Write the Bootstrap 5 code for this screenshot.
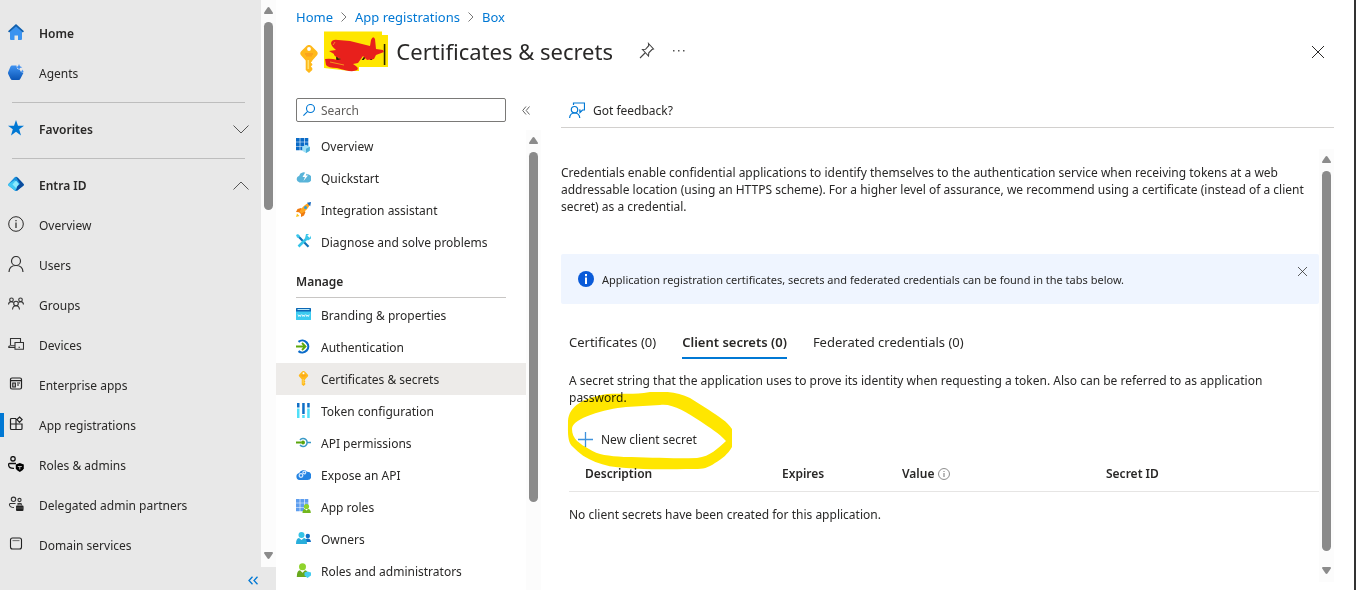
<!DOCTYPE html>
<html lang="en">
<head>
<meta charset="utf-8">
<meta name="viewport" content="width=device-width, initial-scale=1">
<title>Box | Certificates &amp; secrets</title>
<link href="https://cdn.jsdelivr.net/npm/bootstrap@5.3.0/dist/css/bootstrap.min.css" rel="stylesheet">
<style>
:root{--ink:#292827;--azure:#0078d4;--thumb:#8b8b8b}
body{font-family:"Noto Sans","Open Sans",sans-serif;font-size:12px;line-height:17px;color:var(--ink);background:#fff}
a{text-decoration:none}
svg{flex:none;display:block}
.semi{font-weight:600}
/* scroll bars */
.track{width:15px;background:#fcfcfc;padding:7px 3px 8px;flex:none}
.track svg{width:9px;height:7px;fill:var(--thumb)}
.thumb{width:9px;border-radius:5px;background:var(--thumb);margin-top:8px}
.menu .track{margin-bottom:-16px}
/* portal navigation */
.portal{width:276px;background:#e8e8e8;flex:none}
.portal .nav{padding-top:13px}
.portal .nav-link{height:40px;padding:0 12px 0 8px;gap:15px;color:var(--ink);display:flex;align-items:center;flex-shrink:0}
.portal .nav-link>svg:first-child{margin-bottom:2px}
.portal .current{position:relative}
.portal .current::before{content:"";position:absolute;left:0;top:8px;bottom:8px;width:4px;background:var(--azure)}
.portal hr{margin:9px 16px 6px 12px;border-color:#bdbdbd;opacity:1}
.collapse-row{height:23px;padding:4px 18px 0 0}
/* header */
.blade{border-right:2px solid #333}
.crumbs{height:34px;padding-left:20px;gap:8px;font-size:13px}
.crumbs,.crumbs a{color:var(--azure)}
.title-row{height:64px;padding:0 30px 0 20px}
.title-row h1{font-size:22px;line-height:34px;font-weight:400;margin:0 0 0 16px}
.title-key{margin:11px 0 0 4px}
.title-row .tools{margin:8px 0 0 26px;gap:18px}
.plain{border:0;background:none;padding:0;color:var(--ink)}
.marker{position:absolute;pointer-events:none}
.title-ink{left:-10px;top:-3px}
.multiply{mix-blend-mode:multiply}
/* resource menu */
.menu{width:265px;flex:none}
.search{height:24px;width:210px;margin:0 0 0 20px;border:1px solid #7a7977;border-radius:2px;padding:0 6px;gap:6px}
.search input{border:0;outline:0;padding:0;background:none;font-size:12px;width:100%}
.search input::placeholder{color:#605e5c;opacity:1}
.menu .nav-link{height:32px;padding:0 0 0 20px;gap:10px;color:var(--ink);display:flex;align-items:center;flex-shrink:0}
.menu .nav-link>svg{margin-bottom:2px}
.menu .nav-link.active{background:#edebe9}
.menu h2{font-size:12px;line-height:17px;margin:15px 20px 1px;padding-bottom:7px;border-bottom:1px solid #c8c6c4}
/* work area */
.work{padding:0 20px}
.toolbar{height:30px;border-bottom:1px solid #d2d0ce;padding:0 8px 5px;margin-bottom:21px}
.intro{margin:15px 0 39px}
.notice{background:#eff5ff;border:0;border-radius:2px;height:50px;padding:0 12px 0 17px;gap:8px;color:var(--ink);font-size:11px}
.tabs{padding-left:8px;gap:26px;margin-top:25px;font-size:13px}
.tabs .nav-link{padding:5px 0 6px;color:var(--ink);border-bottom:2px solid transparent;line-height:17px}
.tabs .nav-link.active{border-color:var(--azure);font-weight:600}
.secrets{padding-left:8px}
.secrets p{margin:13px 0 16px}
.add{height:34px;gap:8px;padding-left:9px}
.ring{left:-2px;top:-30px}
.secrets table{table-layout:fixed;margin:0;font-size:12px;color:var(--ink)}
.secrets th{font-weight:600;padding:9px 16px;line-height:17px;border-color:#e6e5e4}
.secrets td{padding:14px 0;border:0}
</style>
</head>
<body>
<svg width="0" height="0" class="position-absolute" aria-hidden="true">
 <symbol id="up" viewBox="0 0 9 7"><path d="M3.4.8Q4.5-.6 5.6.8L8.8 5.4Q9.300 7 8 7H1Q-.3 7 .2 5.400z"/></symbol>
 <symbol id="down" viewBox="0 0 9 7"><path d="M3.400 6.200Q4.500 7.600 5.600 6.200L8.800 1.600Q9.300 0 8 0H1Q-.3 0 .2 1.600z"/></symbol>
 <symbol id="key" viewBox="0 0 18 28"><path fill="#ffb91b" d="M9 0C7.500 0 7 .5 6 1.500L1.200 6.300C0 7.500 0 9 1 10.300L5.700 15.500V25L9 28l3.300-3v-2l-1.500-1.500 1.500-1.500v-1l-1.500-1.500 1.500-1.500v-.5L17 10.300c1-1.300 1-2.800-.2-4L12 1.500C11 .5 10.500 0 9 0z"/><circle cx="9" cy="4" r="1.900" fill="#fff"/><path d="M5 8.500h8v1H5zM6 10.500h6v.8H6z" fill="#f78d1e"/><path d="M7.500 15h1.600v9H7.500z" fill="#ffe06c"/></symbol>
 <symbol id="info" viewBox="0 0 16 16"><circle cx="8" cy="8" r="7.300" fill="none" stroke="currentColor"/><path d="M7.400 6.500h1.200V12H7.400zM7.400 4h1.200v1.300H7.400z" fill="currentColor"/></symbol>
 <symbol id="cross" viewBox="0 0 12 12"><path d="M0 0 12 12M12 0 0 12" stroke="currentColor" fill="none"/></symbol>
</svg>
<div class="d-flex vh-100 overflow-hidden">
 <aside class="portal d-flex flex-column">
  <div class="d-flex flex-fill overflow-hidden">
   <nav class="nav flex-column flex-nowrap flex-fill" aria-label="Portal">
    <a class="nav-link semi" href="#"><svg width="16" height="16" viewBox="0 0 16 16"><path d="M2 7.500 8 2l6 5.500V15a1 1 0 0 1-1 1H10v-4.500H6.500V16H3a1 1 0 0 1-1-1z" fill="#3b93f0"/><path d="M8 0 0 7.300 1.200 8.500 8 2.500l6.800 6L16 7.300z" fill="#0f5fae"/></svg>Home</a>
    <a class="nav-link" href="#"><svg width="16" height="16" viewBox="0 0 16 16"><defs><linearGradient id="ag" x2="0" y2="1"><stop stop-color="#3e93f2"/><stop offset="1" stop-color="#0b55b5"/></linearGradient></defs><path d="M4 1.500h4.500c0 3 1 4 3.500 4.500.5 2 1.500 2.500 3.500 2.700L12.500 14.500Q12 16 10.500 16h-6Q3 16 2.400 14.500L.2 10q-.4-1 0-2L2.400 2.800Q3 1.500 4 1.500z" fill="url(#ag)"/><path d="M11 0l.9 2.300 2.400.9-2.400.9L11 6.500l-.9-2.400-2.300-.9 2.300-.9zM14.300 5.500l.5 1.200 1.200.5-1.200.5-.5 1.200-.5-1.200-1.200-.5 1.200-.5z" fill="#3c8df0"/></svg>Agents</a>
    <hr>
    <a class="nav-link semi" href="#"><svg width="16" height="16" viewBox="0 0 16 16"><path fill="#0078d4" d="M8 0l2 5.700h6l-4.800 3.600L13 15.500 8 11.800l-5 3.700 1.800-6.200L0 5.700h6z"/></svg>Favorites<svg class="ms-auto" width="16" height="9" viewBox="0 0 16 9" fill="none" stroke="#555"><path d="M.5.5 8 8 15.500.5"/></svg></a>
    <hr>
    <a class="nav-link semi" href="#"><svg width="16" height="16" viewBox="0 0 16 16"><path d="M8 .8Q9 .8 10 2l5.600 6q.7 1-.3 1.800L9 14.700q-1 .7-2 0L.7 9.800Q-.3 9 .4 8L6 2Q7 .8 8 .8z" fill="#1890dc"/><path d="M8 .8 10 2l5.600 6q.7 1-.3 1.800L9 14.700 7 12 12 8z" fill="#0b4b9c"/><path d="M.4 8 7 4l2 8-2 2.500L.7 9.800Q-.2 9 .4 8z" fill="#40c8f4"/><path d="M8 4.500 11 8 8 12 4.500 8.500z" fill="#8ceafd"/></svg>Entra ID<svg class="ms-auto" width="16" height="9" viewBox="0 0 16 9" fill="none" stroke="#555"><path d="M.5 8.500 8 1l7.500 7.500"/></svg></a>
    <a class="nav-link" href="#"><svg width="16" height="16"><use href="#info"/></svg>Overview</a>
    <a class="nav-link" href="#"><svg width="16" height="16" viewBox="0 0 16 16" fill="none" stroke="#333" stroke-width="1.200"><circle cx="8" cy="5" r="4.500"/><path d="M1 16q.3-6.500 7-6.500t7 6.500"/></svg>Users</a>
    <a class="nav-link" href="#"><svg width="16" height="16" viewBox="0 0 16 16" fill="none" stroke="#333" stroke-width="1.100"><circle cx="8" cy="7.500" r="2.300"/><circle cx="3.500" cy="3.800" r="1.800"/><circle cx="12.500" cy="3.800" r="1.800"/><path d="M4.500 13.500q.4-3.700 3.500-3.700t3.500 3.700M.5 8.500q.2-2.900 3-2.900l2 .8M15.500 8.500q-.2-2.900-3-2.900l-2 .8"/></svg>Groups</a>
    <a class="nav-link" href="#"><svg width="16" height="16" viewBox="0 0 16 16" fill="none" stroke="#333" stroke-width="1.100"><path d="M2.500 9V2.500h10V6M.5 11.500q0-1.500 2-1.800h4M.5 11.500h6M7 6.500h8.500v6.800H7zM10.500 11.200H12"/></svg>Devices</a>
    <a class="nav-link" href="#"><svg width="16" height="16" viewBox="0 0 16 16" fill="none" stroke="#222" stroke-width="1.200"><rect x="2.500" y="2" width="11" height="11" rx="1.500"/><path d="M2.500 4.600h11M4.800 7h2.500v4H4.800zM9 7h3M9 9h2"/></svg>Enterprise apps</a>
    <a class="nav-link current" href="#" aria-current="page"><svg width="16" height="16" viewBox="0 0 16 16" fill="none" stroke="#222" stroke-width="1.200"><path d="M8 2.500H3.500q-1 0-1 1v9q0 1 1 1H13q1 0 1-1V8H2.500M8 2.500v11M11.500 1l2.600 2.600-2.600 2.700L9 3.600z"/></svg>App registrations</a>
    <a class="nav-link" href="#"><svg width="16" height="16" viewBox="0 0 16 16" fill="none" stroke="#111" stroke-width="1.300"><circle cx="5" cy="2.800" r="2.200"/><path d="M8 7.500H1.500Q.5 7.500.6 9q.4 3.500 5.400 3.300"/><path d="M11.800 7l4 1.500v3.700q-.5 2.600-4 3.800-3.500-1.200-4-3.800V8.500z" fill="#000" stroke="none"/><path d="M9.800 10.500h4M11.800 10.500v3" stroke="#bbb" stroke-width="1"/></svg>Roles &amp; admins</a>
    <a class="nav-link" href="#"><svg width="16" height="16" viewBox="0 0 16 16" fill="none" stroke="#333" stroke-width="1.100"><circle cx="5.500" cy="3.300" r="2.200"/><circle cx="11.500" cy="4" r="1.600"/><path d="M7.500 7.500H2.200Q1.400 7.500 1.500 9 2 11.500 6 11.500M13.500 7.500h-4"/><rect x="8" y="9.500" width="7.500" height="5.500" rx="1" fill="#222" stroke="none"/><path d="M10 9.500V8.200h3.500v1.300M8 12h7.500" stroke="#555"/></svg>Delegated admin partners</a>
    <a class="nav-link" href="#"><svg width="16" height="16" viewBox="0 0 16 16" fill="none" stroke="#222" stroke-width="1.100"><rect x="2.500" y="2" width="11" height="11" rx="2"/><path d="M4.500 4.600h7" stroke="#777"/></svg>Domain services</a>
   </nav>
   <div class="track d-flex flex-column" aria-hidden="true"><svg><use href="#up"/></svg><div class="thumb" style="height:34%"></div><svg class="mt-auto"><use href="#down"/></svg></div>
  </div>
  <div class="collapse-row d-flex align-items-center justify-content-end">
   <button class="plain" aria-label="Collapse navigation"><svg width="10" height="9" viewBox="0 0 10 9" fill="none" stroke="#0078d4" stroke-width="1.300"><path d="M4.500.8 1 4.500 4.500 8.200M9.500.8 6 4.500l3.500 3.700"/></svg></button>
  </div>
 </aside>

 <main class="blade d-flex flex-column flex-fill overflow-hidden">
  <nav class="crumbs d-flex align-items-center flex-shrink-0" aria-label="breadcrumb">
   <a href="#">Home</a><svg width="6" height="10" viewBox="0 0 6 10" fill="none" stroke="#777"><path d="M.5.5 5 5 .5 9.500"/></svg>
   <a href="#">App registrations</a><svg width="6" height="10" viewBox="0 0 6 10" fill="none" stroke="#777"><path d="M.5.5 5 5 .5 9.500"/></svg>
   <a href="#">Box</a>
  </nav>
  <header class="title-row d-flex align-items-start flex-shrink-0">
   <div class="d-flex align-items-start">
    <svg class="title-key" width="18" height="28"><use href="#key"/></svg>
    <h1 class="position-relative">Box | Certificates &amp; secrets
     <svg class="marker title-ink multiply" width="66" height="42" viewBox="0 0 66 42"><path d="M0 .5H58V4H64V36H35V40H26L0 37z" fill="#ffe600"/></svg>
     <svg class="marker title-ink" width="66" height="42" viewBox="0 0 66 42"><path d="M7 12Q8 8 14 9L26 10 46 15 47 9Q49 4 51 8L52 18 59 19 60 21 52 24 50 28 43 29 39 25 34 32 29 33Q36 37 33 39 28 42 13 37 4 37 2 34L1 28Q6 27 14 29L17 28Q9 25 10 23L5 20 12 19Q7 15 7 12z" fill="#e8201c"/><path d="M6 31l14 3M11 11l-2 3" stroke="#f5921c"/></svg>
    </h1>
   </div>
   <div class="tools d-flex align-items-center">
    <button class="plain" aria-label="Pin"><svg width="16" height="17" viewBox="0 0 16 17" fill="none" stroke="#444" stroke-width="1.100"><path d="M9.500 1.500 14.500 7 13 7.500l-3.200 3.300L9.500 14 3.500 7.500l3-.2 3.200-3.600zM6 11l-5 5"/></svg></button>
    <button class="plain" aria-label="More"><svg width="12" height="2" viewBox="0 0 12 2"><path fill="#555" d="M0 0h1.500v1.500H0zM5 0h1.500v1.500H5zM10 0h1.500v1.500H10z"/></svg></button>
   </div>
   <button class="plain ms-auto mt-2" aria-label="Close"><svg class="mt-1" width="12" height="12"><use href="#cross"/></svg></button>
  </header>

  <div class="d-flex flex-fill overflow-hidden">
   <section class="menu d-flex flex-column">
    <div class="d-flex align-items-center flex-shrink-0 pb-0">
     <label class="search d-flex align-items-center"><svg width="12" height="12" viewBox="0 0 12 12" fill="none" stroke="#0078d4" stroke-width="1.100"><circle cx="7.500" cy="4.500" r="4"/><path d="M4.700 7.300.4 11.600"/></svg><input type="search" placeholder="Search" aria-label="Search"></label>
     <button class="plain ms-3" aria-label="Collapse menu"><svg width="8" height="9" viewBox="0 0 8 9" fill="none" stroke="#666"><path d="M4 .5.700 4.500 4 8.500M7.500.5 4.200 4.500l3.300 4"/></svg></button>
    </div>
    <div class="d-flex flex-fill overflow-hidden mt-2">
     <nav class="nav flex-column flex-nowrap flex-fill" aria-label="Resource menu">
      <a class="nav-link" href="#"><svg width="15" height="15" viewBox="0 0 15 15"><path fill="#0a6bc7" d="M0 0h3.700v3.700H0zM4.300 0H8v3.700H4.300zM8.600 0h3.700v3.700H8.600zM0 4.300h3.700V8H0zM4.300 4.300H8V8H4.300zM8.600 4.300h3.700V8H8.600zM0 8.600h3.700v3.700H0zM4.300 8.600H8v3.700H4.300z"/><path fill="#9fe0f7" d="M10 6.800l3.800 2v4L10 15l-3.800-2.200v-4z"/><path fill="#4bb0d8" d="M10 10.800l3.800-2v4L10 15z"/></svg>Overview</a>
      <a class="nav-link" href="#"><svg width="15" height="15" viewBox="0 0 15 15"><path fill="#59b4d9" d="M3.500 12.500a3.500 3.500 0 0 1-.3-6.800A4.300 4.300 0 0 1 11 4.300a4 4 0 0 1 1 8.200z"/><path fill="#fff" d="M9.500 2 6.500 7H9l-1.500 4L12 5.500H9.700L11.500 2z"/></svg>Quickstart</a>
      <a class="nav-link" href="#"><svg width="15" height="15" viewBox="0 0 15 15"><path fill="#ef7b10" d="M5 6 1.500 7 0 10l3 .2L5 12v3l3-1.500L9.500 10z"/><path fill="#ffa51f" d="M13 1Q7.500 2.500 3.500 9.500l2 2Q12 8 14 2z"/><path d="M11 0.800 15 0l-.8 4.200Q12.500 3 11 .8z" fill="#1768c0"/><circle cx="9.500" cy="5.500" r="1.500" fill="#2b9ad6"/><path d="M0 15l1-3.500L3.500 14z" fill="#fcc419"/></svg>Integration assistant</a>
      <a class="nav-link" href="#"><svg width="15" height="15" viewBox="0 0 15 15"><path d="M2 2 12.500 12.800" stroke="#1173b8" stroke-width="2.200"/><path d="M12.500 2.800 2.500 12.500" stroke="#35c4e8" stroke-width="2.600"/><path d="M0 1 2 0l2 2-1 2-2-.5zM10 0l3 0-2 2 1 2 2-.500 1-2v3l-3 2-3-2z" fill="#3cc6ea"/></svg>Diagnose and solve problems</a>
      <h2 class="semi">Manage</h2>
      <a class="nav-link" href="#"><svg width="15" height="15" viewBox="0 0 15 15"><path fill="#3ccbf0" d="M0 2h15v10.500q0 .5-.5.500H.5Q0 13 0 12.500z"/><path fill="#0c67b5" d="M.5 1h14q.5 0 .5.5V4.500H0v-3Q0 1 .5 1z"/><path d="M1.500 2h12v1h-12z" fill="#b9e7f8"/><path d="M2 7.500l.8 2 .8-1.500.8 1.500.8-2M6 7.500l.8 2 .8-1.500.8 1.500.8-2M10 7.500l.8 2 .8-1.500.8 1.500.8-2" fill="none" stroke="#fff" stroke-width=".8"/></svg>Branding &amp; properties</a>
      <a class="nav-link" href="#"><svg width="15" height="15" viewBox="0 0 15 15" fill="none"><path d="M2.500 2.800A6 6 0 1 1 2.500 12.200" stroke="#0a6bc9" stroke-width="2.200"/><path d="M0 7.500h9M6 4l3.500 3.500L6 11" stroke="#5ea90b" stroke-width="1.800"/></svg>Authentication</a>
      <a class="nav-link active" href="#" aria-current="page"><svg width="15" height="15"><use href="#key"/></svg>Certificates &amp; secrets</a>
      <a class="nav-link" href="#"><svg width="15" height="15" viewBox="0 0 15 15"><path fill="#0f6fc6" d="M1 0h2.500v4.500H1zM6.200 0h2.500v11H6.200zM11.200 0h2.500v4.500h-2.500z"/><path fill="#50dff8" d="M1 5.500h2.500V15H1zM6.200 12h2.500v3H6.200zM11.200 5.500h2.500V15h-2.500z"/></svg>Token configuration</a>
      <a class="nav-link" href="#"><svg width="15" height="15" viewBox="0 0 15 15" fill="none"><path d="M4 5a4 4 0 1 1 0 5M11 7.500h4" stroke="#3999c6" stroke-width="1.500"/><path d="M0 7.500h5" stroke="#59a50d" stroke-width="2"/><circle cx="7" cy="7.500" r="2" fill="#59a50d"/></svg>API permissions</a>
      <a class="nav-link" href="#"><svg width="15" height="15" viewBox="0 0 15 15"><path fill="#2383e2" d="M3.500 13a3.500 3.500 0 0 1-.3-6.900A4.500 4.500 0 0 1 11 4.800 4.100 4.100 0 0 1 11.500 13z"/><circle cx="5" cy="8.500" r="1.800" fill="none" stroke="#cfe6ff" stroke-width="1.300"/><circle cx="8.300" cy="5.500" r="1.400" fill="none" stroke="#cfe6ff" stroke-width="1.200"/></svg>Expose an API</a>
      <a class="nav-link" href="#"><svg width="15" height="15" viewBox="0 0 15 15"><path fill="#5e9eef" d="M0 0h3.700v3.700H0zM4.300 0H8v3.700H4.300zM8.600 0h3.700v3.700H8.600zM0 4.300h3.700V8H0zM4.300 4.300H8V8H4.300zM8.600 4.300h3.700V8H8.600zM0 8.600h3.700v3.700H0zM4.300 8.600H8v3.700H4.300z"/><circle cx="10.500" cy="7.500" r="2.600" fill="#8fd32c"/><path fill="#73b71e" d="M6.500 14q0-4 2.500-4l1.500 1.500L12 10q2.800 0 2.800 4z"/></svg>App roles</a>
      <a class="nav-link" href="#"><svg width="15" height="15" viewBox="0 0 15 15"><circle cx="11.800" cy="5" r="2.200" fill="#0f6fc6"/><path fill="#0f6fc6" d="M9 11q0-3.500 2.800-3.500T15 11z"/><circle cx="5.500" cy="4" r="3" fill="#35c3e6"/><path fill="#28aedb" d="M0 13q0-5.500 3-6l2.500 2L8 7q3 .5 3 6z"/></svg>Owners</a>
      <a class="nav-link" href="#"><svg width="15" height="15" viewBox="0 0 15 15"><circle cx="6.500" cy="3.700" r="3.500" fill="#8fd32c"/><path fill="#68a81d" d="M.8 14q0-6.500 3.200-6.800l2.500 2.500L9 7.200q3.200.3 3.200 6.800z"/><path fill="#45cdee" d="M11.500 8.500 15 9.500v3l-3.500 2.500L8.500 12.500v-3z"/></svg>Roles and administrators</a>
     </nav>
     <div class="track d-flex flex-column" aria-hidden="true"><svg class="flex-shrink-0"><use href="#up"/></svg><div class="thumb" style="height:76%"></div><svg class="mt-auto mb-n1"><use href="#down"/></svg></div>
    </div>
   </section>

   <section class="work d-flex flex-column flex-fill overflow-hidden">
    <div class="toolbar flex-shrink-0 d-flex">
     <button class="plain d-flex align-items-center gap-2"><svg width="16" height="17" viewBox="0 0 16 17" fill="none" stroke="#0078d4" stroke-width="1.200"><circle cx="5.500" cy="7.700" r="3.200"/><path d="M.6 16q.4-5 4.900-5 4.800 0 5.300 5M4.500 3V1h11v7h-2l-2.500 2.500V8H10"/></svg>Got feedback?</button>
    </div>
    <div class="d-flex flex-fill overflow-hidden mb-2">
     <div class="flex-fill overflow-hidden">
      <p class="intro">Credentials enable confidential applications to identify themselves to the authentication service when receiving tokens at a web addressable location (using an HTTPS scheme). For a higher level of assurance, we recommend using a certificate (instead of a client secret) as a credential.</p>
      <div class="notice alert d-flex align-items-center mb-0" role="status">
       <svg width="16" height="16" viewBox="0 0 16 16"><circle cx="8" cy="8" r="8" fill="#0a5bd9"/><path d="M7 6.500h2V13H7zM7 3h2v2.200H7z" fill="#fff"/></svg>
       <span>Application registration certificates, secrets and federated credentials can be found in the tabs below.</span>
       <button class="plain ms-auto mb-3" aria-label="Dismiss"><svg width="9" height="9"><use href="#cross"/></svg></button>
      </div>
      <nav class="tabs nav">
       <a class="nav-link" href="#">Certificates (0)</a>
       <a class="nav-link active" href="#" aria-current="true">Client secrets (0)</a>
       <a class="nav-link" href="#">Federated credentials (0)</a>
      </nav>
      <div class="secrets">
       <p>A secret string that the application uses to prove its identity when requesting a token. Also can be referred to as application password.</p>
       <div class="position-relative">
        <button class="plain add d-flex align-items-center"><svg width="15" height="15" viewBox="0 0 15 15"><path d="M7.500 0v15M0 7.500h15" stroke="#3f92dc" stroke-width="1.300"/></svg>New client secret</button>
        <svg class="marker ring multiply" width="166" height="78" viewBox="0 0 166 78"><path fill="#ffe600" fill-rule="evenodd" d="M1 29C2 14 16 6 40 2 55 1 66 3 83 0c15-1 28 0 40 6l19 12c10 7 18 11 23 19v18c-4 7-10 12-17 16-7 5-12 6-20 6-25 0-45 1-69-1C36 75 18 68 6 55 0 50 1 40 1 29zM5 37c0 10 8 15 17 20 9 6 20 7 35 8 25 0 45 2 73 1 14-2 20-9 29-17-7-8-16-13-26-20-14-9-28-18-40-16L59 15C38 17 5 26 5 37z"/></svg>
       </div>
       <table class="table">
        <colgroup><col style="width:197px"><col style="width:120px"><col style="width:204px"><col></colgroup>
        <thead><tr><th scope="col">Description</th><th scope="col">Expires</th><th scope="col"><span class="d-flex align-items-center">Value<svg class="ms-1" width="12" height="12" color="#666"><use href="#info"/></svg></span></th><th scope="col">Secret ID</th></tr></thead>
        <tbody><tr><td colspan="4">No client secrets have been created for this application.</td></tr></tbody>
       </table>
      </div>
     </div>
     <div class="track d-flex flex-column" aria-hidden="true"><svg class="flex-shrink-0"><use href="#up"/></svg><div class="thumb" style="height:91%"></div><svg class="mt-auto"><use href="#down"/></svg></div>
    </div>
   </section>
  </div>
 </main>
</div>
<script src="https://cdn.jsdelivr.net/npm/bootstrap@5.3.0/dist/js/bootstrap.bundle.min.js"></script>
</body>
</html>
